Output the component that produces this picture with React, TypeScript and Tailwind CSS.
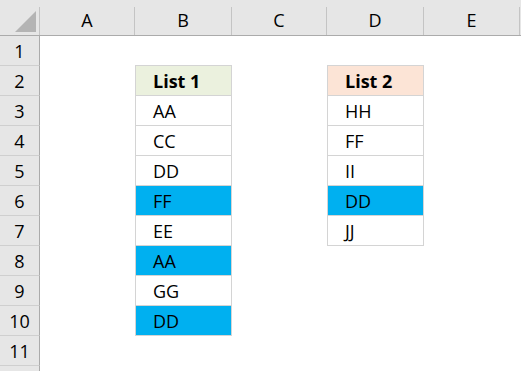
const cols = ['A', 'B', 'C', 'D', 'E'];
const colWidths = ['w-[95px]', 'w-[97px]', 'w-[95px]', 'w-[97px]', 'w-[96px]'];

type Cell = { text: string; kind: 'head1' | 'head2' | 'plain' | 'hit' };

const listB: Cell[] = [
  { text: 'List 1', kind: 'head1' },
  { text: 'AA', kind: 'plain' },
  { text: 'CC', kind: 'plain' },
  { text: 'DD', kind: 'plain' },
  { text: 'FF', kind: 'hit' },
  { text: 'EE', kind: 'plain' },
  { text: 'AA', kind: 'hit' },
  { text: 'GG', kind: 'plain' },
  { text: 'DD', kind: 'hit' },
];

const listD: Cell[] = [
  { text: 'List 2', kind: 'head2' },
  { text: 'HH', kind: 'plain' },
  { text: 'FF', kind: 'plain' },
  { text: 'II', kind: 'plain' },
  { text: 'DD', kind: 'hit' },
  { text: 'JJ', kind: 'plain' },
];

function cellBg(kind: Cell['kind']) {
  if (kind === 'head1') return 'bg-[#ebf1de] font-bold';
  if (kind === 'head2') return 'bg-[#fce4d6] font-bold';
  if (kind === 'hit') return 'bg-[#00b0f0]';
  return 'bg-white';
}

function DataCell({ cell, width }: { cell?: Cell; width: string }) {
  if (!cell) return <div className={`${width} h-full`} />;
  return (
    <div
      className={`${width} h-full flex items-center pl-[17px] pt-[2px] border-x border-b border-[#d4d4d4] ${cellBg(cell.kind)}`}
    >
      {cell.text}
    </div>
  );
}

export default function App() {
  const rows = Array.from({ length: 11 }, (_, i) => i + 1);

  return (
    <div
      className="w-[521px] h-[371px] overflow-hidden bg-white text-[18px] text-black"
      style={{ fontFamily: '"Open Sans", "Noto Sans", sans-serif' }}
    >
      {/* column header strip */}
      <div className="flex h-[36px] bg-[#e6e6e6] border-b border-[#ababab]">
        <div className="w-[40px] h-full flex flex-col">
          <div className="h-[7px]" />
          <div className="flex-1 border-r border-[#c4c4c4] relative">
            <svg width="40" height="28" className="absolute left-0 top-0">
              <polygon points="15,25 36,4 36,25" fill="#b4b4b4" />
            </svg>
          </div>
        </div>
        {cols.map((c, i) => (
          <div key={c} className={`${colWidths[i]} h-full flex flex-col`}>
            <div className="h-[7px]" />
            <div className="flex-1 border-r border-[#c4c4c4] flex items-center justify-center leading-none pb-[3px]">
              {c}
            </div>
          </div>
        ))}
      </div>

      {rows.map((r) => {
        const b = r >= 2 ? listB[r - 2] : undefined;
        const d = r >= 2 ? listD[r - 2] : undefined;
        return (
          <div key={r} className="flex h-[30px]">
            <div className="w-[40px] h-full bg-[#e6e6e6] border-r border-b border-r-[#ababab] border-b-[#cfcfcf] flex items-center justify-center pt-[2px]">
              {r}
            </div>
            <div className={`${colWidths[0]} h-full`} />
            {r === 1 ? (
              <div className={`${colWidths[1]} h-full border-b border-[#d4d4d4]`} />
            ) : (
              <DataCell cell={b} width={colWidths[1]} />
            )}
            <div className={`${colWidths[2]} h-full`} />
            {r === 1 ? (
              <div className={`${colWidths[3]} h-full border-b border-[#d4d4d4]`} />
            ) : (
              <DataCell cell={d} width={colWidths[3]} />
            )}
            <div className={`${colWidths[4]} h-full`} />
          </div>
        );
      })}

      {/* partly visible row 12 */}
      <div className="flex h-[30px]">
        <div className="w-[40px] h-full bg-[#e6e6e6] border-r border-[#ababab]" />
      </div>
    </div>
  );
}
